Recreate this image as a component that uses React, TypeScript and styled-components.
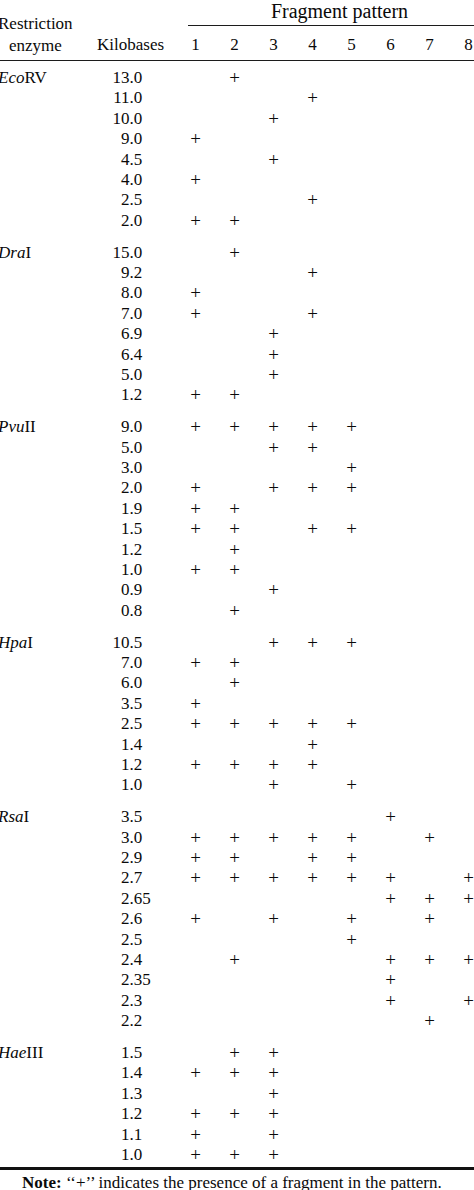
import styled, { createGlobalStyle } from "styled-components";

const GlobalStyle = createGlobalStyle`
  body {
    margin: 0;
    background: #ffffff;
    color: #0a0a0a;
    font-family: "Liberation Serif", "Times New Roman", serif;
    overflow: hidden;
  }
`;

type Row = [string, number[]];
type Group = { italic: string; roman: string; rows: Row[] };

const groups: Group[] = [
  {
    italic: "Eco",
    roman: "RV",
    rows: [
      ["13.0", [2]],
      ["11.0", [4]],
      ["10.0", [3]],
      ["9.0", [1]],
      ["4.5", [3]],
      ["4.0", [1]],
      ["2.5", [4]],
      ["2.0", [1, 2]],
    ],
  },
  {
    italic: "Dra",
    roman: "I",
    rows: [
      ["15.0", [2]],
      ["9.2", [4]],
      ["8.0", [1]],
      ["7.0", [1, 4]],
      ["6.9", [3]],
      ["6.4", [3]],
      ["5.0", [3]],
      ["1.2", [1, 2]],
    ],
  },
  {
    italic: "Pvu",
    roman: "II",
    rows: [
      ["9.0", [1, 2, 3, 4, 5]],
      ["5.0", [3, 4]],
      ["3.0", [5]],
      ["2.0", [1, 3, 4, 5]],
      ["1.9", [1, 2]],
      ["1.5", [1, 2, 4, 5]],
      ["1.2", [2]],
      ["1.0", [1, 2]],
      ["0.9", [3]],
      ["0.8", [2]],
    ],
  },
  {
    italic: "Hpa",
    roman: "I",
    rows: [
      ["10.5", [3, 4, 5]],
      ["7.0", [1, 2]],
      ["6.0", [2]],
      ["3.5", [1]],
      ["2.5", [1, 2, 3, 4, 5]],
      ["1.4", [4]],
      ["1.2", [1, 2, 3, 4]],
      ["1.0", [3, 5]],
    ],
  },
  {
    italic: "Rsa",
    roman: "I",
    rows: [
      ["3.5", [6]],
      ["3.0", [1, 2, 3, 4, 5, 7]],
      ["2.9", [1, 2, 4, 5]],
      ["2.7", [1, 2, 3, 4, 5, 6, 8]],
      ["2.65", [6, 7, 8]],
      ["2.6", [1, 3, 5, 7]],
      ["2.5", [5]],
      ["2.4", [2, 6, 7, 8]],
      ["2.35", [6]],
      ["2.3", [6, 8]],
      ["2.2", [7]],
    ],
  },
  {
    italic: "Hae",
    roman: "III",
    rows: [
      ["1.5", [2, 3]],
      ["1.4", [1, 2, 3]],
      ["1.3", [3]],
      ["1.2", [1, 2, 3]],
      ["1.1", [1, 3]],
      ["1.0", [1, 2, 3]],
    ],
  },
];

const cols = [1, 2, 3, 4, 5, 6, 7, 8];

const Page = styled.div`
  width: 474px;
  overflow: hidden;
`;

const Table = styled.div`
  width: 490px;
  margin-left: -2px;
  font-size: 17px;
`;

const Header = styled.div`
  display: grid;
  grid-template-columns: 98px 80px repeat(8, 39px);
  grid-template-rows: 26px auto;
  border-bottom: 1.5px solid #1c1c1c;
`;

const EnzymeHead = styled.div`
  grid-column: 1;
  grid-row: 1 / span 2;
  align-self: end;
  justify-self: start;
  display: flex;
  flex-direction: column;
  align-items: center;
  line-height: 22px;
  padding-bottom: 3px;
`;

const Spanner = styled.div`
  grid-column: 3 / span 8;
  grid-row: 1;
  margin-left: 12px;
  padding: 0 0 1px 3px;
  line-height: 22px;
  font-size: 20px;
  text-align: center;
  border-bottom: 1.5px solid #1c1c1c;
`;

const HeadCell = styled.div<{ $center?: boolean }>`
  grid-row: 2;
  line-height: 20px;
  padding: 9px 0 5px ${(p) => (p.$center ? "0" : "1px")};
  text-align: ${(p) => (p.$center ? "center" : "left")};
`;

const Body = styled.div`
  padding-top: 7px;
  border-bottom: 3px solid #111;
  padding-bottom: 2px;
`;

const GroupBlock = styled.div`
  & + & {
    margin-top: 11.5px;
  }
`;

const DataRow = styled.div`
  display: grid;
  grid-template-columns: 98px 80px repeat(8, 39px);
  height: 20.4px;
  line-height: 20.4px;
`;

const Enzyme = styled.div`
  i {
    font-style: italic;
  }
`;

const Kb = styled.div`
  padding-left: 16px;
`;

const IntPart = styled.span`
  display: inline-block;
  width: 17.5px;
  text-align: right;
`;

const Mark = styled.div`
  text-align: center;
  font-size: 19px;
`;

const Note = styled.div`
  padding: 2px 0 0 24px;
  line-height: 22px;
  font-size: 17px;
  white-space: nowrap;
  b {
    font-weight: bold;
  }
`;

function Kilo({ value }: { value: string }) {
  const [i, f] = value.split(".");
  return (
    <Kb>
      <IntPart>{i}</IntPart>.{f}
    </Kb>
  );
}

export default function App() {
  return (
    <Page>
      <GlobalStyle />
      <Table>
        <Header>
          <EnzymeHead>
            <span>Restriction</span>
            <span>enzyme</span>
          </EnzymeHead>
          <Spanner>Fragment pattern</Spanner>
          <HeadCell style={{ gridColumn: 2 }}>Kilobases</HeadCell>
          {cols.map((c) => (
            <HeadCell key={c} $center style={{ gridColumn: c + 2 }}>
              {c}
            </HeadCell>
          ))}
        </Header>
        <Body>
          {groups.map((g) => (
            <GroupBlock key={g.italic}>
              {g.rows.map(([kb, marks], idx) => (
                <DataRow key={kb + idx}>
                  <Enzyme>
                    {idx === 0 ? (
                      <>
                        <i>{g.italic}</i>
                        {g.roman}
                      </>
                    ) : null}
                  </Enzyme>
                  <Kilo value={kb} />
                  {cols.map((c) => (
                    <Mark key={c}>{marks.includes(c) ? "+" : ""}</Mark>
                  ))}
                </DataRow>
              ))}
            </GroupBlock>
          ))}
        </Body>
        <Note>
          <b>Note:</b> ‘‘+’’ indicates the presence of a fragment in the pattern.
        </Note>
      </Table>
    </Page>
  );
}
